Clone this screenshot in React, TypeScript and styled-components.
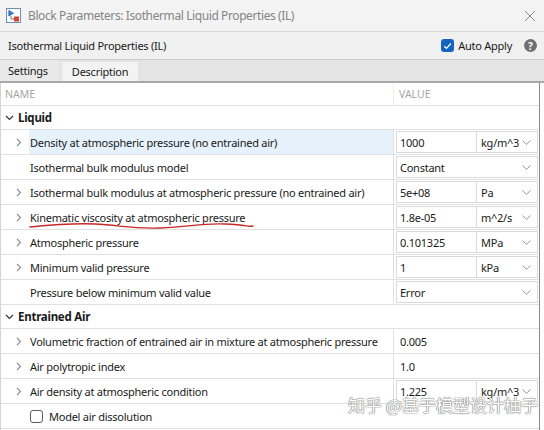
import React from "react";
import styled, { createGlobalStyle } from "styled-components";

const GlobalStyle = createGlobalStyle`
  html, body { margin: 0; padding: 0; background: #ffffff; }
  body {
    font-family: "Noto Sans", "Liberation Sans", sans-serif;
    font-size: 11px;
    letter-spacing: -0.25px;
    color: #1a1a1a;
  }
  * { box-sizing: border-box; }
`;

const Window = styled.div`
  position: relative;
  width: 544px;
  height: 430px;
  overflow: hidden;
  display: flex;
  flex-direction: column;
  background: #ffffff;
`;

const TitleBar = styled.div`
  height: 32px;
  flex: none;
  display: flex;
  align-items: center;
  gap: 7px;
  padding: 0 8px 0 6px;
  background: #f3f3f3;
  border-bottom: 1px solid #d6d6d6;
`;

const TitleText = styled.div`
  flex: 1;
  font-size: 12px;
  letter-spacing: -0.4px;
  color: #858585;
  white-space: nowrap;
`;

const Toolbar = styled.div`
  height: 28px;
  flex: none;
  display: flex;
  align-items: center;
  padding: 0 7px 0 8px;
  background: #f0f0f0;
  border-bottom: 1px solid #cfcfcf;
`;

const BlockName = styled.div`
  flex: 1;
  color: #1a1a1a;
`;

const AutoApply = styled.label`
  display: flex;
  align-items: center;
  gap: 4px;
  color: #1a1a1a;
  margin-right: 12px;
`;

const BlueCheck = styled.span`
  width: 13px;
  height: 13px;
  border-radius: 3px;
  background: #1565c0;
  display: inline-flex;
  align-items: center;
  justify-content: center;
`;

const HelpIcon = styled.span`
  width: 13px;
  height: 13px;
  border-radius: 50%;
  background: #707070;
  color: #ffffff;
  font-size: 10px;
  font-weight: 700;
  letter-spacing: 0;
  display: inline-flex;
  align-items: center;
  justify-content: center;
  line-height: 1;
`;

const TabStrip = styled.div`
  height: 23px;
  flex: none;
  display: flex;
  align-items: stretch;
  gap: 2px;
  background: #e4e4e4;
  border-bottom: 2px solid #a8a8a8;
`;

const Tab = styled.div<{ $active?: boolean }>`
  display: flex;
  align-items: center;
  padding: 0 ${(p) => (p.$active ? "11px 0 8px" : "10px")};
  margin-top: ${(p) => (p.$active ? "0" : "2px")};
  margin-left: ${(p) => (p.$active ? "0" : "1px")};
  color: #1a1a1a;
  background: ${(p) => (p.$active ? "#e9e9e9" : "#f3f3f3")};
`;

const Table = styled.div`
  flex: 1;
  display: flex;
  flex-direction: column;
  width: 540px;
  border-left: 1px solid #d4d4d4;
  border-right: 1px solid #8a8a8a;
`;

const Row = styled.div<{ $h?: number }>`
  height: ${(p) => p.$h ?? 25}px;
  flex: none;
  display: grid;
  grid-template-columns: 392px 1fr;
  border-bottom: 1px solid #e0e0e0;
`;

const HeaderCell = styled.div<{ $sep?: boolean }>`
  display: flex;
  align-items: center;
  padding-left: ${(p) => (p.$sep ? "5px" : "4px")};
  font-size: 10.5px;
  color: #a6a6a6;
  letter-spacing: 0;
  border-left: ${(p) => (p.$sep ? "1px solid #ececec" : "none")};
`;

const GroupRow = styled.div`
  height: 24px;
  flex: none;
  display: flex;
  align-items: center;
  gap: 4px;
  padding-left: 4px;
  font-size: 11.5px;
  font-weight: 700;
  color: #1a1a1a;
  border-bottom: 1px solid #e0e0e0;
`;

const NameCell = styled.div`
  display: flex;
  align-items: center;
  color: #1a1a1a;
  white-space: nowrap;
  overflow: hidden;
`;

const ChevronSlot = styled.span`
  width: 28px;
  flex: none;
  display: flex;
  align-items: center;
  padding-left: 15px;
`;

const Label = styled.span<{ $selected?: boolean }>`
  flex: 1;
  align-self: stretch;
  display: flex;
  align-items: center;
  padding-left: 1px;
  background: ${(p) => (p.$selected ? "#e5f1fb" : "transparent")};
`;

const ValueCell = styled.div`
  display: flex;
  align-items: stretch;
  padding: 1px 1px 1px 2px;
  border-left: 1px solid #e0e0e0;
`;

const Field = styled.div<{ $grow?: boolean; $plain?: boolean }>`
  ${(p) => (p.$grow ? "flex: 1;" : "width: 81px; flex: none;")}
  display: flex;
  align-items: center;
  padding-left: 3px;
  background: #ffffff;
  border: 1px solid ${(p) => (p.$plain ? "transparent" : "#dadada")};
  color: #1a1a1a;
`;

const Select = styled.div`
  flex: 1;
  display: flex;
  align-items: center;
  justify-content: space-between;
  padding: 0 6px 0 4px;
  background: #ffffff;
  border: 1px solid #dadada;
  border-left: none;
  color: #1a1a1a;
`;

const WideSelect = styled(Select)`
  border-left: 1px solid #dadada;
  padding-left: 3px;
`;

const CheckRow = styled.div`
  height: 25px;
  flex: none;
  display: flex;
  align-items: center;
  gap: 6px;
  padding-left: 29px;
  color: #1a1a1a;
  border-bottom: 1px solid #e0e0e0;
`;

const EmptyBox = styled.span`
  width: 13px;
  height: 13px;
  border: 1px solid #5c5c5c;
  border-radius: 3px;
  background: #ffffff;
`;

const Scribble = styled.svg`
  position: absolute;
  left: 0;
  top: 0;
  pointer-events: none;
`;

const Watermark = styled.div`
  position: absolute;
  left: 348px;
  top: 394px;
  font-family: "Noto Sans CJK SC", "Noto Sans", sans-serif;
  font-size: 17px;
  line-height: 22px;
  color: #ffffff;
  letter-spacing: 0;
  text-shadow: 0 0 1px #7a7a7a, 0 0 1px #7a7a7a, 0 0 1px #7a7a7a;
  white-space: nowrap;
`;

const Right = () => (
  <svg width="6" height="9" viewBox="0 0 6 9">
    <path d="M1 1 L4.5 4.5 L1 8" fill="none" stroke="#8c8c8c" strokeWidth="1.1" />
  </svg>
);

const Down = () => (
  <svg width="9" height="6" viewBox="0 0 9 6">
    <path d="M1 1 L4.5 4.5 L8 1" fill="none" stroke="#333" strokeWidth="1.2" />
  </svg>
);

const DropCaret = () => (
  <svg width="9" height="5" viewBox="0 0 9 5">
    <path d="M0.5 0.5 L4.5 4.3 L8.5 0.5" fill="none" stroke="#8a8a8a" strokeWidth="0.9" />
  </svg>
);

type Param = {
  name: string;
  expandable: boolean;
  value: string;
  unit?: string;
  select?: boolean;
  plain?: boolean;
  selected?: boolean;
};

const liquid: Param[] = [
  { name: "Density at atmospheric pressure (no entrained air)", expandable: true, value: "1000", unit: "kg/m^3", selected: true },
  { name: "Isothermal bulk modulus model", expandable: false, value: "Constant", select: true },
  { name: "Isothermal bulk modulus at atmospheric pressure (no entrained air)", expandable: true, value: "5e+08", unit: "Pa" },
  { name: "Kinematic viscosity at atmospheric pressure", expandable: true, value: "1.8e-05", unit: "m^2/s" },
  { name: "Atmospheric pressure", expandable: true, value: "0.101325", unit: "MPa" },
  { name: "Minimum valid pressure", expandable: true, value: "1", unit: "kPa" },
  { name: "Pressure below minimum valid value", expandable: false, value: "Error", select: true },
];

const air: Param[] = [
  { name: "Volumetric fraction of entrained air in mixture at atmospheric pressure", expandable: true, value: "0.005", plain: true },
  { name: "Air polytropic index", expandable: true, value: "1.0", plain: true },
  { name: "Air density at atmospheric condition", expandable: true, value: "1.225", unit: "kg/m^3" },
];

const ParamRow = ({ p }: { p: Param }) => (
  <Row>
    <NameCell>
      <ChevronSlot>{p.expandable ? <Right /> : null}</ChevronSlot>
      <Label $selected={p.selected}>{p.name}</Label>
    </NameCell>
    <ValueCell>
      {p.select ? (
        <WideSelect>
          <span>{p.value}</span>
          <DropCaret />
        </WideSelect>
      ) : p.plain ? (
        <Field $grow $plain>{p.value}</Field>
      ) : (
        <>
          <Field>{p.value}</Field>
          <Select>
            <span>{p.unit}</span>
            <DropCaret />
          </Select>
        </>
      )}
    </ValueCell>
  </Row>
);

export default function App() {
  return (
    <>
      <GlobalStyle />
      <Window>
        <TitleBar>
          <svg width="15" height="15" viewBox="0 0 15 15">
            <rect x="0.5" y="0.5" width="14" height="14" fill="#ffffff" stroke="#6b8fb8" />
            <path d="M3 2.5 L3 8 M3 2.5 L7.5 5.2 L3 8 Z" fill="#3f7fc6" stroke="#2e6fb7" strokeWidth="0.8" />
            <path d="M5 8 L5 11 L8 11" fill="none" stroke="#555" strokeWidth="0.8" />
            <rect x="8" y="8.5" width="5" height="5" fill="#d8412f" />
          </svg>
          <TitleText>Block Parameters: Isothermal Liquid Properties (IL)</TitleText>
          <svg width="12" height="12" viewBox="0 0 12 12">
            <path d="M1 1 L11 11 M11 1 L1 11" stroke="#8a8a8a" strokeWidth="1" />
          </svg>
        </TitleBar>
        <Toolbar>
          <BlockName>Isothermal Liquid Properties (IL)</BlockName>
          <AutoApply>
            <BlueCheck>
              <svg width="9" height="8" viewBox="0 0 9 8">
                <path d="M1.2 4.2 L3.5 6.3 L7.8 1.5" fill="none" stroke="#ffffff" strokeWidth="1.2" />
              </svg>
            </BlueCheck>
            Auto Apply
          </AutoApply>
          <HelpIcon>?</HelpIcon>
        </Toolbar>
        <TabStrip>
          <Tab $active>Settings</Tab>
          <Tab>Description</Tab>
        </TabStrip>
        <Table>
          <Row $h={23}>
            <HeaderCell>NAME</HeaderCell>
            <HeaderCell $sep>VALUE</HeaderCell>
          </Row>
          <GroupRow>
            <Down />
            Liquid
          </GroupRow>
          {liquid.map((p) => (
            <ParamRow key={p.name} p={p} />
          ))}
          <GroupRow>
            <Down />
            Entrained Air
          </GroupRow>
          {air.map((p) => (
            <ParamRow key={p.name} p={p} />
          ))}
          <CheckRow>
            <EmptyBox />
            Model air dissolution
          </CheckRow>
        </Table>
        <Scribble width="544" height="430" viewBox="0 0 544 430">
          <path
            d="M30 227 C 50 225, 70 223, 95 224 S 130 229, 160 228 S 200 223, 225 224 S 245 227, 253 226"
            fill="none"
            stroke="#c62828"
            strokeWidth="1.4"
            strokeLinecap="round"
          />
        </Scribble>
        <Watermark>知乎 @基于模型设计柚子</Watermark>
      </Window>
    </>
  );
}
